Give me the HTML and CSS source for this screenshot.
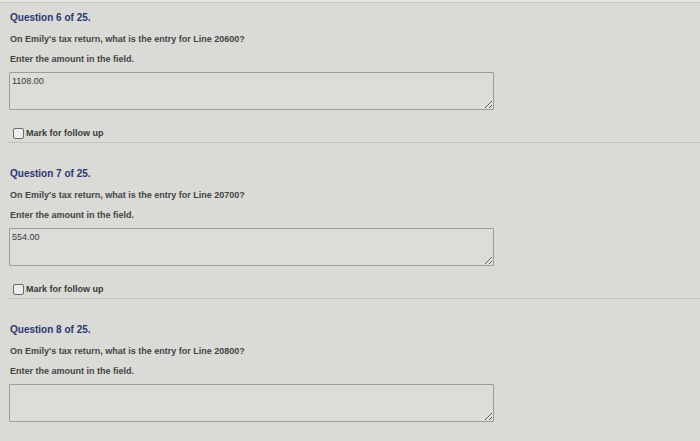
FILE: index.html
```html
<!DOCTYPE html>
<html>
<head>
<meta charset="utf-8">
<link rel="stylesheet" href="styles.css">
</head>
<body>
<div class="topbar"></div>
<main class="list">
  <section class="question">
    <h2 class="q-title">Question 6 of 25.</h2>
    <p class="q-text">On Emily's tax return, what is the entry for Line 20600?</p>
    <p class="q-text">Enter the amount in the field.</p>
    <textarea class="answer" readonly>1108.00</textarea>
    <label class="follow"><span class="box"></span>Mark for follow up</label>
  </section>
  <section class="question">
    <h2 class="q-title">Question 7 of 25.</h2>
    <p class="q-text">On Emily's tax return, what is the entry for Line 20700?</p>
    <p class="q-text">Enter the amount in the field.</p>
    <textarea class="answer" readonly>554.00</textarea>
    <label class="follow"><span class="box"></span>Mark for follow up</label>
  </section>
  <section class="question last">
    <h2 class="q-title">Question 8 of 25.</h2>
    <p class="q-text">On Emily's tax return, what is the entry for Line 20800?</p>
    <p class="q-text">Enter the amount in the field.</p>
    <textarea class="answer" readonly></textarea>
  </section>
</main>
</body>
</html>
```
FILE: styles.css
```css
html, body {
  margin: 0;
  padding: 0;
  background: #dadad6;
  height: 441px;
  overflow: hidden;
}
body {
  font-family: "Liberation Sans", Arial, sans-serif;
  color: #3d3d3d;
}
.topbar {
  height: 2px;
  background: #e4e4e0;
  border-bottom: 1px solid #c4c4c0;
}
.list {
  padding-top: 5px;
}
.question {
  margin: 0 0 21px 8px;
  padding: 0 0 0 2px;
  border-bottom: 1px solid #c2c2be;
}
.question.last {
  border-bottom: none;
}
.q-title {
  margin: 0 0 1px 0;
  font-size: 10px;
  line-height: 20px;
  font-weight: bold;
  color: #2c3672;
}
.q-text {
  margin: 0;
  font-size: 9px;
  line-height: 20px;
  font-weight: bold;
  color: #444444;
}
.answer {
  display: block;
  box-sizing: border-box;
  margin: 3px 0 0 -1px;
  width: 485px;
  height: 38px;
  padding: 3px 2px;
  border: 1px solid #9c9c9a;
  border-radius: 1px;
  background: #dcdcd8;
  font-family: "Liberation Sans", Arial, sans-serif;
  font-size: 9px;
  line-height: 11px;
  color: #3a3a3a;
  resize: both;
  outline: none;
}
.follow {
  display: flex;
  align-items: center;
  gap: 2px;
  margin-top: 15px;
  height: 16px;
  margin-bottom: 1px;
  font-size: 9px;
  font-weight: bold;
  color: #3a3a3a;
}
.box {
  display: inline-block;
  box-sizing: border-box;
  width: 11px;
  height: 11px;
  margin-left: 3px;
  border: 1px solid #6c6c6c;
  border-radius: 2px;
  background: #ececea;
}
```
